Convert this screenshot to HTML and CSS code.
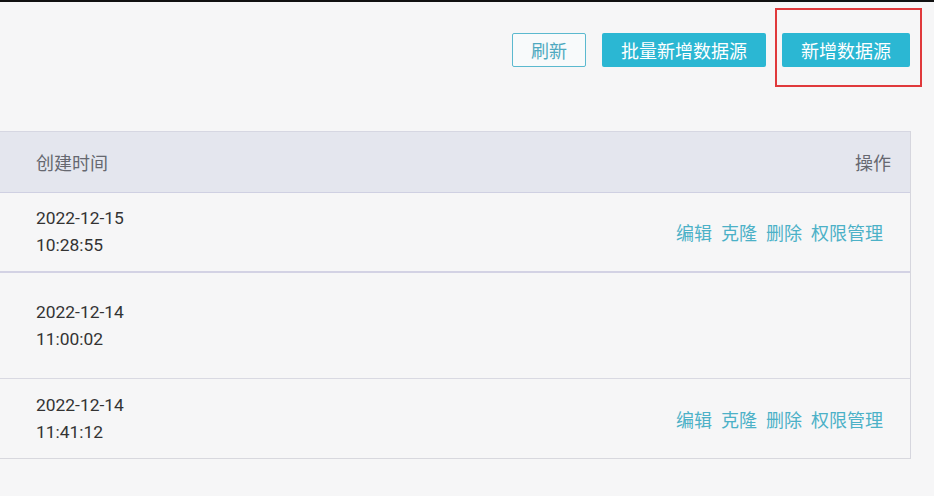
FILE: index.html
```html
<!DOCTYPE html>
<html lang="zh">
<head>
<meta charset="utf-8">
<link rel="stylesheet" href="styles.css">
</head>
<body>
<div class="topbar"></div>
<div class="toolbar">
  <button class="btn btn-outline">刷新</button>
  <button class="btn btn-primary">批量新增数据源</button>
  <div class="highlight-wrap">
    <button class="btn btn-primary">新增数据源</button>
    <div class="highlight"></div>
  </div>
</div>
<div class="table">
  <div class="row head">
    <div class="cell time">创建时间</div>
    <div class="cell ops">操作</div>
  </div>
  <div class="row body first">
    <div class="cell time"><div>2022-12-15</div><div>10:28:55</div></div>
    <div class="cell ops links"><a>编辑</a><a>克隆</a><a>删除</a><a>权限管理</a></div>
  </div>
  <div class="row body tall">
    <div class="cell time"><div>2022-12-14</div><div>11:00:02</div></div>
    <div class="cell ops links"></div>
  </div>
  <div class="row body">
    <div class="cell time"><div>2022-12-14</div><div>11:41:12</div></div>
    <div class="cell ops links"><a>编辑</a><a>克隆</a><a>删除</a><a>权限管理</a></div>
  </div>
</div>
</body>
</html>
```

FILE: styles.css
```css
html, body {
  margin: 0;
  padding: 0;
  background: #f6f6f7;
  font-family: "Noto Sans CJK SC", "Noto Sans", sans-serif;
}
.topbar {
  height: 2px;
  background: #111;
}
.toolbar {
  display: flex;
  justify-content: flex-end;
  align-items: center;
  gap: 16px;
  padding: 31px 24px 0 0;
  height: 34px;
}
.btn {
  height: 34px;
  padding: 0 18px;
  border: 1px solid transparent;
  border-radius: 2px;
  font-family: "Noto Sans CJK SC", sans-serif;
  font-size: 18px;
  line-height: 32px;
  cursor: pointer;
}
.btn-outline {
  background: #f8fafb;
  border-color: #5bb9cf;
  color: #4fa9c0;
}
.btn-primary {
  background: #2bb7d3;
  color: #fff;
}
.highlight-wrap {
  position: relative;
  display: flex;
}
.highlight {
  position: absolute;
  left: -7px;
  top: -25px;
  width: 143px;
  height: 75px;
  border: 2px solid #e0393b;
  pointer-events: none;
}
.table {
  margin: 64px 23px 0 0;
  border-right: 1px solid #d6d6de;
  border-bottom: 1px solid #d8d8de;
}
.row {
  display: flex;
  align-items: center;
  padding: 0 19px 0 36px;
}
.row.head {
  height: 60px;
  background: #e4e6ee;
  border-top: 1px solid #d6d7e2;
  border-bottom: 1px solid #cfd0e2;
  color: #666870;
  font-size: 18px;
}
.row.body {
  height: 79px;
  background: #f6f6f7;
  border-bottom: 1px solid #d9d9e2;
  color: #333;
}
.row.body:last-child {
  border-bottom: none;
}
.row.body.first {
  height: 78px;
  border-bottom: 2px solid #d3d2e4;
}
.row.body.tall {
  height: 105px;
}
.cell.time {
  flex: 1;
}
.row.body .cell.time {
  font-family: Roboto, "Noto Sans", sans-serif;
  font-size: 17.4px;
  line-height: 27px;
  color: #333;
}
.cell.ops {
  text-align: right;
}
.links {
  display: flex;
  gap: 9px;
  margin-right: 8px;
  font-size: 18px;
}
.links a {
  color: #4cb1c7;
  cursor: pointer;
}
```
